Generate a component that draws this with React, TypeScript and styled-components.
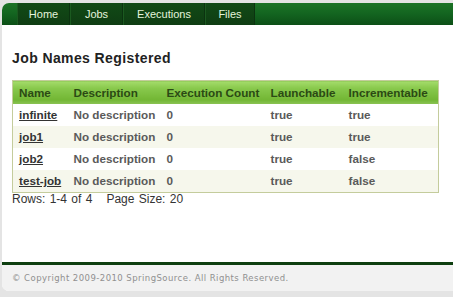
import React from 'react';
import styled, { createGlobalStyle } from 'styled-components';

const GlobalStyle = createGlobalStyle`
  html, body {
    margin: 0;
    padding: 0;
    background: #e4e4e4;
  }
`;

const Page = styled.div`
  width: 453px;
  height: 297px;
  padding: 3px 0 0 2px;
  box-sizing: border-box;
  background: #e4e4e4;
  font-family: "Liberation Sans", Arial, sans-serif;
  overflow: hidden;
`;

const Frame = styled.div`
  background: #fff;
  border-radius: 7px 0 0 7px;
  overflow: hidden;
  display: flex;
  flex-direction: column;
  height: 288px;
`;

const NavBar = styled.nav`
  display: flex;
  height: 22px;
  padding-left: 15px;
  background: linear-gradient(to bottom, #1c7426 0%, #136420 50%, #0c4f16 100%);
`;

const NavItem = styled.a`
  display: flex;
  align-items: center;
  justify-content: center;
  width: ${p => p.$w}px;
  box-sizing: border-box;
  font-size: 11px;
  color: #e4f4dc;
  text-decoration: none;
  background: linear-gradient(to bottom, #114a16 0%, #0f3d13 100%);
  border-right: 1px solid #0b3310;
  border-left: 1px solid #1b5a20;
`;

const Content = styled.main`
  flex: 1;
  padding: 25px 0 0 10px;
`;

const Title = styled.h2`
  margin: 0 0 13px;
  font-size: 14px;
  line-height: 17px;
  font-weight: bold;
  color: #222;
  letter-spacing: 0.4px;
`;

const Table = styled.table`
  width: 426px;
  border-collapse: collapse;
  table-layout: fixed;
  border: 1px solid #c4cc9c;
  font-size: 11.7px;
  font-weight: bold;
`;

const HeadCell = styled.th`
  box-sizing: border-box;
  width: ${p => p.$w}px;
  height: 23px;
  padding: 0 0 0 6px;
  text-align: left;
  color: #2b4a14;
  background: linear-gradient(to bottom, #a4dc6a 0%, #88c84c 30%, #72b634 80%, #8cc456 100%);
  white-space: nowrap;
  overflow: hidden;
`;

const Row = styled.tr`
  background: ${p => (p.$alt ? '#f6f7ec' : '#ffffff')};
`;

const Cell = styled.td`
  height: 22px;
  padding: 0 0 0 6px;
  color: #5a5a5a;
  white-space: nowrap;
`;

const JobLink = styled.a`
  color: #333;
  text-decoration: underline;
`;

const Pager = styled.div`
  margin-top: -1px;
  font-size: 12px;
  line-height: 14px;
  color: #333;
  word-spacing: 1px;
`;

const Gap = styled.span`
  display: inline-block;
  width: 14px;
`;

const Footer = styled.footer`
  height: 26px;
  border-top: 3px solid #0e3f10;
  background: #f2f2f2;
  display: flex;
  align-items: center;
  padding-left: 10px;
  font-family: "DejaVu Sans", Verdana, sans-serif;
  font-size: 8.5px;
  letter-spacing: 0.45px;
  color: #909090;
`;

const columns = [
  { label: 'Name', w: 55 },
  { label: 'Description', w: 93 },
  { label: 'Execution Count', w: 104 },
  { label: 'Launchable', w: 78 },
  { label: 'Incrementable', w: 96 },
];

const jobs = [
  { name: 'infinite', count: 0, launchable: 'true', incrementable: 'true' },
  { name: 'job1', count: 0, launchable: 'true', incrementable: 'true' },
  { name: 'job2', count: 0, launchable: 'true', incrementable: 'false' },
  { name: 'test-job', count: 0, launchable: 'true', incrementable: 'false' },
];

const navItems = [
  { label: 'Home', w: 53 },
  { label: 'Jobs', w: 53 },
  { label: 'Executions', w: 82 },
  { label: 'Files', w: 50 },
];

const App: React.FC = () => (
  <>
    <GlobalStyle />
    <Page>
      <Frame>
        <NavBar>
          {navItems.map(item => (
            <NavItem key={item.label} href="#" $w={item.w}>
              {item.label}
            </NavItem>
          ))}
        </NavBar>
        <Content>
          <Title>Job Names Registered</Title>
          <Table>
            <thead>
              <tr>
                {columns.map(col => (
                  <HeadCell key={col.label} $w={col.w}>
                    {col.label}
                  </HeadCell>
                ))}
              </tr>
            </thead>
            <tbody>
              {jobs.map((job, i) => (
                <Row key={job.name} $alt={i % 2 === 1}>
                  <Cell>
                    <JobLink href="#">{job.name}</JobLink>
                  </Cell>
                  <Cell>No description</Cell>
                  <Cell>{job.count}</Cell>
                  <Cell>{job.launchable}</Cell>
                  <Cell>{job.incrementable}</Cell>
                </Row>
              ))}
            </tbody>
          </Table>
          <Pager>
            Rows: 1-4 of 4<Gap />Page Size: 20
          </Pager>
        </Content>
        <Footer>© Copyright 2009-2010 SpringSource. All Rights Reserved.</Footer>
      </Frame>
    </Page>
  </>
);

export default App;
